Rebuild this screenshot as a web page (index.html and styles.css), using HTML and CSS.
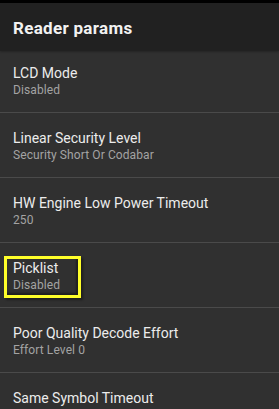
FILE: index.html
```html
<!DOCTYPE html>
<html>
<head>
<meta charset="utf-8">
<link rel="stylesheet" href="styles.css">
</head>
<body>
<div class="screen">
  <div class="statusbar"></div>
  <header class="appbar"><h1 class="appbar-title">Reader params</h1></header>
  <div class="list">
    <div class="row"><div class="row-title">LCD Mode</div><div class="row-sub">Disabled</div></div>
    <div class="row"><div class="row-title">Linear Security Level</div><div class="row-sub">Security Short Or Codabar</div></div>
    <div class="row"><div class="row-title">HW Engine Low Power Timeout</div><div class="row-sub">250</div></div>
    <div class="row"><div class="row-title">Picklist</div><div class="row-sub">Disabled</div><div class="highlight"></div></div>
    <div class="row"><div class="row-title">Poor Quality Decode Effort</div><div class="row-sub">Effort Level 0</div></div>
    <div class="row"><div class="row-title">Same Symbol Timeout</div><div class="row-sub">&nbsp;</div></div>
  </div>
</div>
</body>
</html>
```
FILE: styles.css
```css
html, body {
  margin: 0;
  padding: 0;
  background: #303030;
}
body {
  width: 279px;
  height: 409px;
  overflow: hidden;
  font-family: Roboto, "Liberation Sans", sans-serif;
}
.screen {
  display: flex;
  flex-direction: column;
  height: 409px;
  overflow: hidden;
}
.statusbar {
  height: 3px;
  background: #000;
  flex: none;
}
.appbar {
  position: relative;
  z-index: 1;
  height: 48px;
  flex: none;
  background: #212121;
  display: flex;
  align-items: center;
  padding: 0 13px;
  box-shadow: 0 1px 2px rgba(0,0,0,0.25);
}
.appbar-title {
  margin: 0;
  font-size: 17px;
  font-weight: 700;
  letter-spacing: 0.3px;
  color: #f2f2f2;
  line-height: 20px;
  padding-top: 1px;
}
.list {
  margin-top: -3px;
  background: #303030;
}
.row {
  position: relative;
  height: 65px;
  box-sizing: border-box;
  padding: 15px 13px 0;
  border-bottom: 1px solid #4a4a4a;
}
.row-title {
  font-size: 14px;
  line-height: 20px;
  color: #ececec;
  white-space: nowrap;
}
.row-sub {
  font-size: 12px;
  line-height: 14px;
  letter-spacing: 0.1px;
  color: #a3a3a3;
  white-space: nowrap;
}
.highlight {
  position: absolute;
  left: 4px;
  top: 13px;
  width: 77px;
  height: 42px;
  box-sizing: border-box;
  border: 3px solid #ffff2a;
  box-shadow: inset -2px -2px 2px rgba(0,0,0,0.35), 2px 2px 2px rgba(0,0,0,0.35);
}
```
